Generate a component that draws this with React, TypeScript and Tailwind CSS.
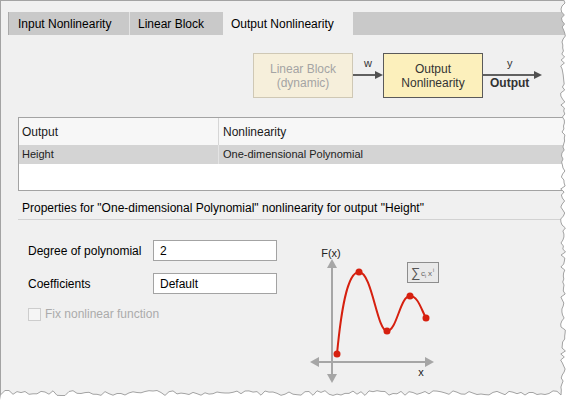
import React from 'react';

const font = "font-['Liberation_Sans',Arial,sans-serif]";

// jagged "torn paper" outline along the right and bottom edge
function buildTear() {
  let s = 11;
  const rnd = () => {
    s = (s * 9301 + 49297) % 233280;
    return s / 233280;
  };
  const pts: [number, number][] = [];
  for (let y = 0; y <= 391; y += 3) pts.push([563 + rnd() * 5 - 2.5, y]);
  for (let x = 561; x >= 0; x -= 4) pts.push([x, 393 + rnd() * 5 - 2.5]);
  const line = pts.map((p, i) => `${i ? 'L' : 'M'}${p[0].toFixed(1)},${p[1].toFixed(1)}`).join(' ');
  const fill = `M570,0 ${line.replace(/^M/, 'L')} L0,400 L570,400 Z`;
  return { line, fill };
}

const tear = buildTear();

function TornEdge() {
  return (
    <svg className="absolute inset-0 pointer-events-none" width={570} height={400}>
      <path d={tear.fill} fill="#ffffff" />
      <path d={tear.line} fill="none" stroke="#a3a3a3" strokeWidth={1} />
    </svg>
  );
}

function Tabs() {
  return (
    <div className="flex h-[23px] bg-[#c9c9c9] border-l border-[#a9a9a9]">
      <div className="w-[121px] pl-[9px] flex items-center border-r border-[#e3e3e3]">Input Nonlinearity</div>
      <div className="w-[93px] pl-[8px] flex items-center">Linear Block</div>
      <div className="w-[130px] pl-[8px] flex items-center bg-[#f0f0f0]">Output Nonlinearity</div>
    </div>
  );
}

function Arrow({ width }: { width: number }) {
  return (
    <svg width={width} height={8} className="block">
      <line x1={0} y1={4} x2={width - 7} y2={4} stroke="#606060" strokeWidth={2} />
      <polygon points={`${width - 8},0 ${width},4 ${width - 8},8`} fill="#505050" />
    </svg>
  );
}

function Diagram() {
  return (
    <div className="flex pl-[245px] pt-[18px] h-[63px]">
      <div className="w-[100px] h-[45px] border border-[#cfc8b5] bg-[#f6efdb] text-[#a4a4a4] flex flex-col items-center justify-center leading-[14px]">
        <span>Linear Block</span>
        <span>(dynamic)</span>
      </div>
      <div className="w-[30px] h-[45px] flex flex-col items-center pt-[4px]">
        <span className="text-[11px] leading-[12px] text-[#333]">w</span>
        <div className="mt-[2px]">
          <Arrow width={30} />
        </div>
      </div>
      <div className="w-[100px] h-[45px] border border-[#5a5a5a] bg-[#fcf0bc] text-[#333] flex flex-col items-center justify-center leading-[14px]">
        <span>Output</span>
        <span>Nonlinearity</span>
      </div>
      <div className="w-[59px] h-[45px] flex flex-col pt-[4px]">
        <span className="text-[11px] leading-[12px] text-[#333] pl-[24px]">y</span>
        <div className="mt-[2px]">
          <Arrow width={59} />
        </div>
        <span className="font-bold text-[#333] leading-[14px] pl-[7px] -mt-[3px]">Output</span>
      </div>
    </div>
  );
}

function Table() {
  return (
    <div className="ml-[10px] mt-[19px] w-[560px] border border-[#a3a3a3] bg-white">
      <div className="flex h-[27px] bg-[#f7f7f7] text-[#1a1a1a]">
        <div className="w-[200px] pl-[3px] flex items-center border-r border-[#d6d6d6]">Output</div>
        <div className="flex-1 pl-[4px] flex items-center">Nonlinearity</div>
      </div>
      <div className="flex h-[19px] bg-[#d4d4d4] text-[11px] text-[#222]">
        <div className="w-[200px] pl-[3px] flex items-center border-r border-[#e4e4e4]">Height</div>
        <div className="flex-1 pl-[4px] flex items-center">One-dimensional Polynomial</div>
      </div>
      <div className="h-[26px]" />
    </div>
  );
}

function Plot() {
  const pts: [number, number][] = [
    [37, 114],
    [59, 32],
    [87, 91],
    [110, 56],
    [126, 78],
  ];
  return (
    <svg width={150} height={150} className="block">
      <g stroke="#a6a6a6" strokeWidth={2}>
        <line x1={32} y1={26} x2={32} y2={136} />
        <line x1={17} y1={122} x2={127} y2={122} />
      </g>
      <g fill="#a6a6a6">
        <polygon points="32,19 27,28 37,28" />
        <polygon points="32,143 27,134 37,134" />
        <polygon points="10,122 19,117 19,127" />
        <polygon points="134,122 125,117 125,127" />
      </g>
      <text x={31} y={17} fontSize={11} textAnchor="middle" fill="#222">F(x)</text>
      <text x={121} y={136} fontSize={11} textAnchor="middle" fill="#222">x</text>
      <path
        d="M37,114 C41,72 47,32 59,32 C72,32 77,91 87,91 C97,91 100,56 110,56 C118,56 121,69 126,78"
        fill="none"
        stroke="#d6200f"
        strokeWidth={2}
      />
      {pts.map(([x, y]) => (
        <circle key={x} cx={x} cy={y} r={3.5} fill="#d6200f" />
      ))}
      <rect x={107.5} y={22.5} width={31} height={20} fill="#e9e9e9" stroke="#8d8d8d" />
      <text x={111} y={37} fontSize={13} fill="#555">∑</text>
      <text x={121} y={36} fontSize={8} fill="#666">c</text>
      <text x={125} y={38} fontSize={5} fill="#666">i</text>
      <text x={128} y={36} fontSize={8} fill="#666">x</text>
      <text x={133} y={32} fontSize={5} fill="#666">i</text>
    </svg>
  );
}

function Form() {
  return (
    <div className="flex mt-[20px] ml-[20px]">
      <div className="w-[272px]">
        <div className="flex items-center h-[21px]">
          <span className="w-[125px]">Degree of polynomial</span>
          <div className="w-[124px] h-[21px] border border-[#a3a3a3] bg-white pl-[6px] flex items-center">2</div>
        </div>
        <div className="flex items-center h-[21px] mt-[12px]">
          <span className="w-[125px]">Coefficients</span>
          <div className="w-[124px] h-[21px] border border-[#a3a3a3] bg-white pl-[6px] flex items-center">Default</div>
        </div>
        <div className="flex items-center mt-[11px] gap-[4px] text-[#ababab]">
          <div className="w-[13px] h-[13px] border border-[#cdcdcd] bg-[#f5f5f5]" />
          <span>Fix nonlinear function</span>
        </div>
      </div>
      <Plot />
    </div>
  );
}

export default function App() {
  return (
    <div className={`relative w-[570px] h-[400px] overflow-hidden bg-white text-[12px] text-black ${font}`}>
      <div className="h-full border-l border-t border-[#a3a3a3] bg-[#f0f0f0] pt-[11px] pl-[7px]">
        <Tabs />
        <Diagram />
        <Table />
        <div className="ml-[10px] mt-[10px] w-[560px] border-b border-[#d2d2d2] pb-[4px] pl-[4px] leading-[14px]">
          Properties for "One-dimensional Polynomial" nonlinearity for output "Height"
        </div>
        <Form />
      </div>
      <TornEdge />
    </div>
  );
}
